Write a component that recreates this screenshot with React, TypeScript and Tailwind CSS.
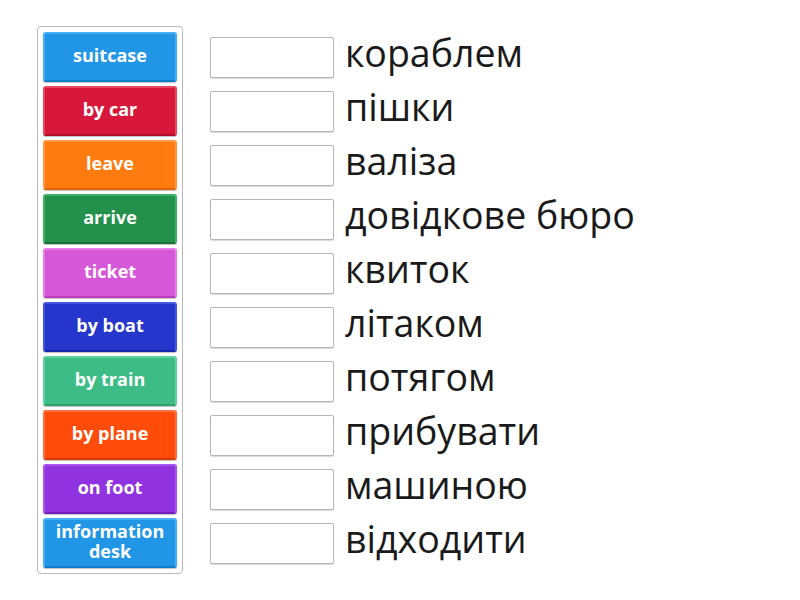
import React from "react";

const tiles: { label: string; cls: string }[] = [
  { label: "suitcase", cls: "bg-[#2196e6] border-[#46aef2] border-b-[#0f7ccc]" },
  { label: "by car", cls: "bg-[#d8183a] border-[#e8475f] border-b-[#b10c28]" },
  { label: "leave", cls: "bg-[#ff7b10] border-[#ff9b45] border-b-[#e0640a]" },
  { label: "arrive", cls: "bg-[#23914c] border-[#3cb366] border-b-[#177336]" },
  { label: "ticket", cls: "bg-[#d757d9] border-[#e57fe6] border-b-[#bb3dbd]" },
  { label: "by boat", cls: "bg-[#2536cc] border-[#4556e0] border-b-[#1726a8]" },
  { label: "by train", cls: "bg-[#3dbd85] border-[#5fd39f] border-b-[#2ea06d]" },
  { label: "by plane", cls: "bg-[#ff4c0a] border-[#ff7040] border-b-[#d93a00]" },
  { label: "on foot", cls: "bg-[#9132e0] border-[#a755ee] border-b-[#7420c0]" },
  { label: "information desk", cls: "bg-[#2196e6] border-[#46aef2] border-b-[#0f7ccc]" },
];

const words = [
  "кораблем",
  "пішки",
  "валіза",
  "довідкове бюро",
  "квиток",
  "літаком",
  "потягом",
  "прибувати",
  "машиною",
  "відходити",
];

export default function App() {
  return (
    <div
      className="w-[800px] h-[600px] bg-white flex items-start"
      style={{ fontFamily: '"Open Sans", "Noto Sans", sans-serif' }}
    >
      <div className="ml-[37px] mt-[26px] w-[146px] border border-[#b8b8b8] rounded-[4px] p-[5px] flex flex-col gap-[4px]">
        {tiles.map((t) => (
          <div
            key={t.label}
            className={`h-[50px] rounded-[3px] border-2 ${t.cls} flex items-center justify-center text-center text-white font-bold text-[18px] leading-[20px] shadow-[0_1px_1px_rgba(0,0,0,0.25)]`}
          >
            <span className="px-1 pb-[4px]">{t.label}</span>
          </div>
        ))}
      </div>
      <div className="ml-[27px] mt-[32px] flex flex-col gap-[4px]">
        {words.map((w) => (
          <div key={w} className="h-[50px] flex items-center">
            <div className="w-[124px] h-[41px] border border-[#b5b5b5] rounded-[2px] bg-white shadow-[0_1px_1px_rgba(0,0,0,0.15)]" />
            <span className="ml-[11px] text-[37.5px] leading-none text-[#1a1a1a] pb-[9px]">{w}</span>
          </div>
        ))}
      </div>
    </div>
  );
}
